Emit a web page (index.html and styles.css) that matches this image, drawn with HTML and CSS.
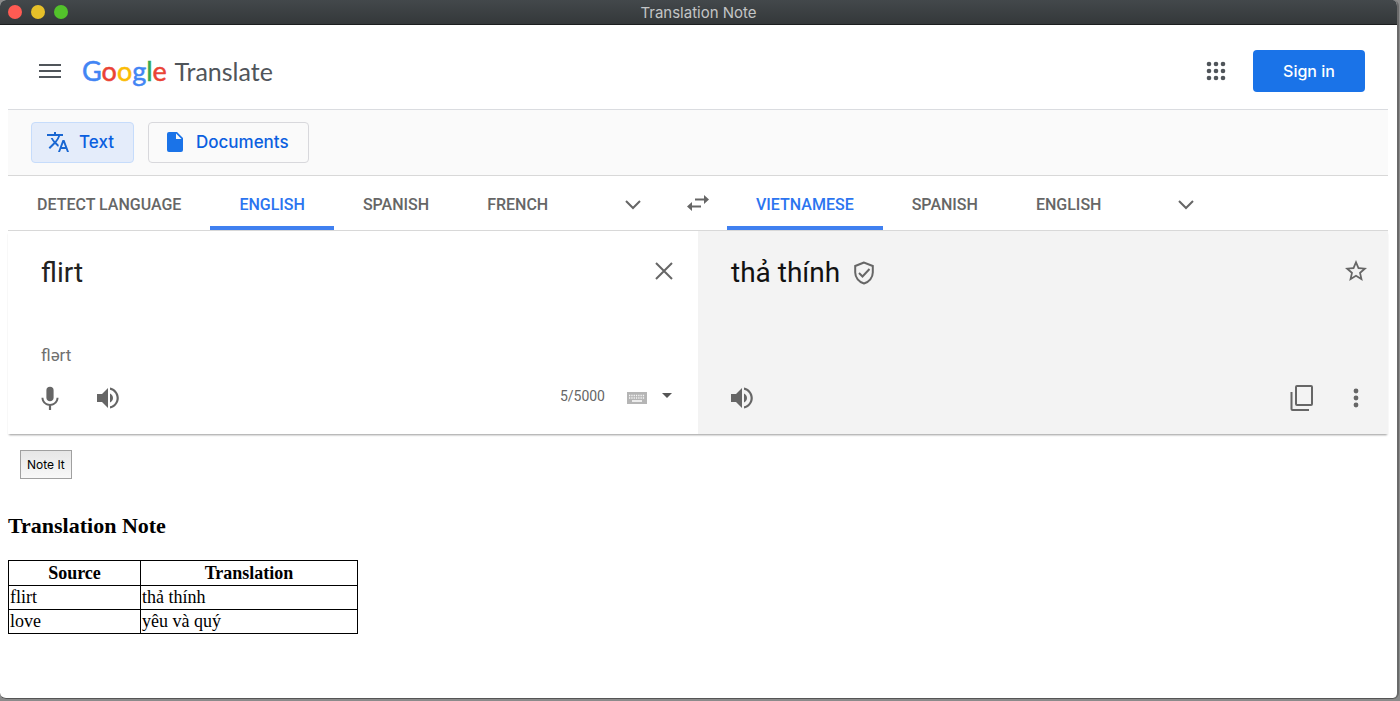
FILE: index.html
```html
<!DOCTYPE html>
<html lang="en">
<head>
  <meta charset="UTF-8">
  <meta name="viewport" content="width=device-width, initial-scale=1.0">
  <title>Translation Note</title>
  <link rel="stylesheet" href="styles.css">
</head>
<body>
  <div class="window">
    <div class="titlebar">
      <div class="lights">
        <span class="light red"></span>
        <span class="light yellow"></span>
        <span class="light green"></span>
      </div>
      <span>Translation Note</span>
    </div>

    <div class="content">
      <header class="header">
        <button class="icon-btn" aria-label="Main menu">
          <svg width="22" height="16" viewBox="0 0 22 16"><path d="M0 2h22M0 8h22M0 14h22" stroke="#50555a" stroke-width="2"/></svg>
        </button>
        <a class="logo" href="#"><span class="google"><span class="b">G</span><span class="r">o</span><span class="y">o</span><span class="b">g</span><span class="g">l</span><span class="r">e</span></span> <span class="product">Translate</span></a>
        <button class="icon-btn apps" aria-label="Google apps">
          <svg width="20" height="20" viewBox="0 0 20 20" fill="#50555a">
            <circle cx="3" cy="3" r="2.300"/><circle cx="10" cy="3" r="2.300"/><circle cx="17" cy="3" r="2.300"/>
            <circle cx="3" cy="10" r="2.300"/><circle cx="10" cy="10" r="2.300"/><circle cx="17" cy="10" r="2.300"/>
            <circle cx="3" cy="17" r="2.300"/><circle cx="10" cy="17" r="2.300"/><circle cx="17" cy="17" r="2.300"/>
          </svg>
        </button>
        <button class="sign-in">Sign in</button>
      </header>

      <div class="modes">
        <button class="mode active">
          <svg width="24" height="24" viewBox="0 0 24 24" fill="#1967d2"><path d="M12.87 15.07l-2.54-2.51.03-.03A17.52 17.52 0 0 0 14.07 6H17V4h-7V2H8v2H1v1.99h11.17C11.5 7.92 10.44 9.75 9 11.35 8.07 10.32 7.3 9.19 6.69 8h-2c.73 1.63 1.73 3.17 2.98 4.56l-5.09 5.02L4 19l5-5 3.11 3.11.76-2.04zM18.5 10h-2L12 22h2l1.12-3h4.75L21 22h2l-4.5-12zm-2.62 7l1.62-4.33L19.12 17h-3.24z"/></svg>
          Text
        </button>
        <button class="mode">
          <svg width="24" height="26" viewBox="0 0 24 24" fill="#1a73e8"><path d="M6 2a2 2 0 0 0-2 2v16a2 2 0 0 0 2 2h12a2 2 0 0 0 2-2V8l-6-6H6zm7 7V3.500L18.500 9H13z"/></svg>
          Documents
        </button>
      </div>

      <nav class="languages">
        <div class="tabs">
          <button class="tab">DETECT LANGUAGE</button>
          <button class="tab active">ENGLISH</button>
          <button class="tab">SPANISH</button>
          <button class="tab">FRENCH</button>
          <button class="icon-btn more" aria-label="More source languages">
            <svg width="16" height="10" viewBox="0 0 16 10"><path d="M1 1l7 7 7-7" fill="none" stroke="#666" stroke-width="2"/></svg>
          </button>
        </div>
        <button class="icon-btn swap" aria-label="Swap languages">
          <svg width="22" height="16" viewBox="0 0 22 16" fill="#666"><path d="M8 3.500h9V0l5 4.500L17 9V5.500H8zM14 10.500H5V7l-5 4.500L5 16v-3.500h9z"/></svg>
        </button>
        <div class="tabs">
          <button class="tab active">VIETNAMESE</button>
          <button class="tab">SPANISH</button>
          <button class="tab">ENGLISH</button>
          <button class="icon-btn more" aria-label="More target languages">
            <svg width="16" height="10" viewBox="0 0 16 10"><path d="M1 1l7 7 7-7" fill="none" stroke="#666" stroke-width="2"/></svg>
          </button>
        </div>
      </nav>

      <div class="panels">
        <section class="panel source">
          <div class="row">
            <textarea class="source-text" rows="1" aria-label="Source text" spellcheck="false">flirt</textarea>
            <button class="icon-btn clear" aria-label="Clear">
              <svg width="18" height="18" viewBox="0 0 18 18"><path d="M1 1l16 16M17 1L1 17" stroke="#666" stroke-width="2"/></svg>
            </button>
          </div>
          <div class="phonetic">flərt</div>
          <div class="row tools">
            <button class="icon-btn mic" aria-label="Translate by voice">
              <svg width="18" height="24" viewBox="4 1 16 22" fill="#666"><path d="M12 15c1.900 0 3.300-1.500 3.300-3.300V5a3.300 3.300 0 0 0-6.600 0v6.700C8.700 13.500 10.100 15 12 15zm6-3.300c0 3.300-2.900 5.700-6 5.700s-6-2.400-6-5.700H4.200c0 3.800 3.100 6.900 6.800 7.400V23h2v-3.900c3.700-.5 6.800-3.600 6.800-7.400z"/></svg>
            </button>
            <button class="icon-btn" aria-label="Listen">
              <svg width="22" height="22" viewBox="0 0 22 22" fill="#666"><path d="M0 7v8h5l6 6V1L5 7zM13 6.500v9c1.700-.8 3-2.400 3-4.500s-1.300-3.700-3-4.500zM13 .5v2.200c3.800.8 6.600 4.200 6.600 8.300s-2.800 7.500-6.600 8.300v2.200c5-.9 8.800-5.300 8.800-10.500S18 1.400 13 .5z"/></svg>
            </button>
            <span class="count">5/5000</span>
            <button class="icon-btn keyboard" aria-label="Input tools">
              <svg width="20" height="12" viewBox="0 0 20 12"><path fill="#b5b5b5" d="M0 0h20v12H0z"/><path d="M2 3.500h16M2 6h16" stroke="#f5f5f5" stroke-width="1.300" stroke-dasharray="1.300 1"/><path d="M5 9h10" stroke="#fff" stroke-width="1.500"/></svg>
            </button>
            <button class="icon-btn arrow" aria-label="Choose input tool">
              <svg width="10" height="5" viewBox="0 0 10 5"><path fill="#555" d="M0 0h10L5 5z"/></svg>
            </button>
          </div>
        </section>

        <section class="panel target">
          <div class="row">
            <span class="result">thả thính</span>
            <svg class="verified" width="20" height="24" viewBox="0 0 20 24" fill="none" stroke="#666" stroke-width="2"><path d="M10 1.500L1.200 5v6.500c0 5 3.700 9.500 8.800 11 5.100-1.500 8.800-6 8.800-11V5z"/><path d="M5 12l3.500 3.500 7-7.500"/></svg>
            <button class="icon-btn star" aria-label="Save translation">
              <svg width="22" height="22" viewBox="2 2 20 20" fill="#666"><path d="M22 9.240l-7.190-.62L12 2 9.190 8.630 2 9.240l5.460 4.730L5.820 21 12 17.270 18.180 21l-1.630-7.030L22 9.240zM12 15.400l-3.760 2.270 1-4.280-3.320-2.880 4.380-.38L12 6.100l1.710 4.040 4.380.38-3.320 2.880 1 4.280L12 15.400z"/></svg>
            </button>
          </div>
          <div class="row tools">
            <button class="icon-btn" aria-label="Listen to translation">
              <svg width="22" height="22" viewBox="0 0 22 22" fill="#666"><path d="M0 7v8h5l6 6V1L5 7zM13 6.500v9c1.700-.8 3-2.400 3-4.500s-1.300-3.700-3-4.500zM13 .5v2.200c3.800.8 6.600 4.200 6.600 8.300s-2.800 7.500-6.600 8.300v2.200c5-.9 8.800-5.300 8.800-10.500S18 1.400 13 .5z"/></svg>
            </button>
            <button class="icon-btn copy" aria-label="Copy translation">
              <svg width="24" height="26" viewBox="0 0 24 26" fill="none" stroke="#666" stroke-width="2"><rect x="6" y="1" width="16" height="19" rx="1"/><path d="M1.500 7v17q0 1 1 1H19"/></svg>
            </button>
            <button class="icon-btn options" aria-label="More options">
              <svg width="6" height="20" viewBox="0 0 6 20" fill="#666"><circle cx="3" cy="3" r="2.400"/><circle cx="3" cy="10" r="2.400"/><circle cx="3" cy="17" r="2.400"/></svg>
            </button>
          </div>
        </section>
      </div>

      <button class="note-btn">Note It</button>

      <h2>Translation Note</h2>
      <table>
        <thead>
          <tr><th>Source</th><th>Translation</th></tr>
        </thead>
        <tbody>
          <tr><td>flirt</td><td>thả thính</td></tr>
          <tr><td>love</td><td>yêu và quý</td></tr>
        </tbody>
      </table>
    </div>
  </div>
</body>
</html>
```
FILE: styles.css
```css
* {
  box-sizing: border-box;
}
body {
  margin: 0;
  background: #8b8b8b;
  font-family: "Liberation Serif", "Times New Roman", serif;
  font-size: 18px;
  color: #000;
}
button {
  font-family: inherit;
  cursor: pointer;
}
.window {
  min-height: calc(100vh - 2px);
  margin-right: 1px;
  background: #fff;
  border-right: 2px solid #6a6a6a;
  border-bottom: 1px solid #555;
  border-radius: 6px;
  overflow: hidden;
}

/* title bar */
.titlebar {
  position: relative;
  display: flex;
  align-items: center;
  justify-content: center;
  height: 25px;
  background: linear-gradient(#43484b, #34383a);
  border-bottom: 1px solid #1c1e1f;
  color: #c3c5c6;
  font-family: Inter, sans-serif;
  font-size: 15px;
}
.lights {
  position: absolute;
  left: 8px;
  display: flex;
  gap: 9px;
}
.light {
  width: 14px;
  height: 14px;
  border-radius: 50%;
}
.light.red { background: #ff5b53; }
.light.yellow { background: #e6c029; }
.light.green { background: #53c22b; }

.content {
  padding: 0 9px 0 8px;
}
.icon-btn {
  display: flex;
  align-items: center;
  justify-content: center;
  padding: 0;
  border: 0;
  background: none;
}

/* header */
.header {
  display: flex;
  align-items: center;
  height: 85px;
  padding: 8px 23px 0 31px;
  border-bottom: 1px solid #dadce0;
}
.logo {
  margin-left: 21px;
  padding-bottom: 2px;
  font-family: Lato, sans-serif;
  font-size: 25px;
  color: #50555a;
  text-decoration: none;
}
.google {
  margin-right: 2px;
  font-size: 27px;
  -webkit-text-stroke: 0.5px;
}
.b { color: #4285f4; }
.r { color: #ea4335; }
.y { color: #fbbc05; }
.g { color: #34a853; }
.apps {
  margin-left: auto;
}
.sign-in {
  width: 112px;
  height: 42px;
  margin-left: 27px;
  border: 0;
  border-radius: 4px;
  background: #1a73e8;
  color: #fff;
  font-family: Inter, sans-serif;
  font-size: 16px;
  font-weight: 500;
}

.modes {
  display: flex;
  gap: 14px;
  padding: 12px 23px;
  background: #fafafa;
  border-bottom: 1px solid #d8d8d8;
}
.mode {
  display: flex;
  align-items: center;
  gap: 9px;
  height: 41px;
  padding: 0 19px 2px 14px;
  border: 1px solid #d8d8dc;
  border-radius: 4px;
  background: #fafafa;
  color: #0b5fe0;
  font-family: Inter, sans-serif;
  font-size: 17px;
  font-weight: 500;
}
.mode.active {
  background: #e4ecfa;
  border-color: #c6dcfb;
}

/* language tabs */
.languages {
  display: flex;
  height: 55px;
  border-bottom: 1px solid #d8d8d8;
  font-family: Roboto, sans-serif;
}
.tabs {
  display: flex;
  flex: 1;
}
.tab {
  padding: 6px 29px 0;
  border: 0;
  border-bottom: 4px solid transparent;
  background: none;
  color: #666;
  font-size: 16px;
  font-weight: 500;
  white-space: nowrap;
}
.tab.active {
  color: #2b74f0;
  border-bottom-color: #4080f0;
}
.more {
  width: 48px;
  margin-left: 32px;
  padding-top: 4px;
}
.swap {
  width: 58px;
}

/* translation panels */
.panels {
  display: grid;
  grid-template-columns: 1fr 1fr;
  box-shadow: 0 2px 2px -1px rgba(0, 0, 0, 0.4);
  font-family: Roboto, sans-serif;
}
.panel {
  display: flex;
  flex-direction: column;
  min-height: 203px;
  padding: 21px 21px 23px 33px;
}
.source {
  padding-right: 25px;
}
.target {
  background: #f3f3f3;
}
.row {
  display: flex;
  align-items: center;
}
.source-text {
  flex: 1;
  min-width: 0;
  height: 42px;
  padding: 0;
  border: 0;
  outline: 0;
  resize: none;
  overflow: hidden;
  background: none;
  color: #222;
  font-family: inherit;
  font-size: 28px;
  line-height: 42px;
}
.result {
  color: #111;
  font-size: 28px;
  line-height: 42px;
}
.verified {
  margin-left: 14px;
}
.clear,
.star {
  padding-bottom: 5px;
}
.star {
  margin-left: auto;
}
.phonetic {
  margin-top: 51px;
  color: #707070;
  font-size: 17px;
  line-height: 20px;
}
.tools {
  height: 26px;
  margin-top: auto;
}
.mic {
  margin-right: 38px;
}
.count {
  margin-left: auto;
  padding-bottom: 4px;
  color: #666;
  font-size: 14px;
}
.keyboard {
  margin-left: 22px;
}
.arrow {
  margin: 0 1px 0 15px;
  padding-bottom: 6px;
}
.copy {
  margin: 0 31px 0 auto;
}
.options {
  width: 22px;
}

/* saved notes */
.note-btn {
  display: block;
  height: 29px;
  margin: 16px 0 0 12px;
  padding: 0 6px;
  border: 1px solid #a0a0a0;
  background: linear-gradient(#e6e6e6, #f8f8f8);
  color: #000;
  font-family: Inter, sans-serif;
  font-size: 12px;
}
h2 {
  margin: 33px 0 20px;
  font-size: 22px;
  line-height: 28px;
}
table {
  width: 350px;
  border-collapse: collapse;
}
th, td {
  padding: 1px;
  border: 1px solid #000;
  font-size: 18px;
  line-height: 22px;
}
td {
  line-height: 21px;
}
th:first-child {
  width: 132px;
}
```
